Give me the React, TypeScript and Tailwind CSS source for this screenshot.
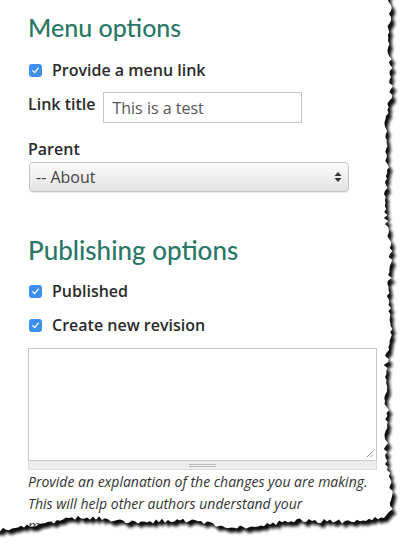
import React from 'react';

// torn paper edge, built once from a seeded jitter so it's stable between renders
const rand = (() => {
    let s = 1337;
    return () => {
        s = (s * 16807) % 2147483647;
        return s / 2147483647;
    };
})();

const buildPaperPath = () => {
    const pts: [number, number][] = [];
    for (let y = -10; y <= 512; y += 3) {
        const x = 388 + 2.5 * Math.sin(y / 37) + 1.5 * Math.sin(y / 13 + 1) + (rand() - 0.5) * 4.5;
        pts.push([x, y]);
    }
    for (let x = 384; x >= -10; x -= 3) {
        const y = 522 + 3 * Math.sin(x / 41 + 2) + 2 * Math.sin(x / 17) + (rand() - 0.5) * 4.5 + (x < 25 ? (25 - x) * 0.2 : 0);
        pts.push([x, y]);
    }
    return 'M-10 -10 ' + pts.map(([x, y]) => `L${x.toFixed(1)} ${y.toFixed(1)}`).join(' ') + ' Z';
};

const PAPER = buildPaperPath();
const OUTSIDE = 'M-20 -20 H430 V570 H-20 Z ' + PAPER;

const TornEdge = () => (
    <svg className="absolute inset-0 pointer-events-none" width="404" height="544" viewBox="0 0 404 544">
        <defs>
            <filter id="blur" x="-10%" y="-10%" width="120%" height="120%">
                <feGaussianBlur stdDeviation="1.8" />
            </filter>
            <clipPath id="outside">
                <path d={OUTSIDE} clipRule="evenodd" />
            </clipPath>
        </defs>
        <path d={OUTSIDE} fill="#ffffff" fillRule="evenodd" />
        <g clipPath="url(#outside)">
            <path d={PAPER} transform="translate(3.5 4.5)" fill="#111111" filter="url(#blur)" />
        </g>
    </svg>
);

const Check = ({ label }: { label: string }) => (
    <div className="flex items-center h-[20px]">
        <span className="w-[13px] h-[13px] ml-[1px] rounded-[3px] bg-[#3d8ff0] flex items-center justify-center">
            <svg width="9" height="9" viewBox="0 0 9 9">
                <path d="M1.8 4.8 L3.7 6.6 L7.3 2.2" fill="none" stroke="#fff" strokeWidth="1.3" strokeLinecap="round" strokeLinejoin="round" />
            </svg>
        </span>
        <span className="ml-[10px] text-[16px] font-semibold text-[#2b2b2b]">{label}</span>
    </div>
);

export default function App() {
    return (
        <div className="relative w-[404px] h-[544px] overflow-hidden bg-white font-['Open_Sans',sans-serif]">
            <div className="pl-[28px] pt-[12px]">
                {/* Menu options */}
                <h2 className="h-[30px] leading-[30px] text-[25px] font-medium text-[#2a7767] font-['Lato',sans-serif]">Menu options</h2>
                <div className="mt-[18px]">
                    <Check label="Provide a menu link" />
                </div>
                <div className="mt-[12px] flex items-start">
                    <label className="pt-[2px] leading-[20px] text-[16px] font-semibold text-[#2b2b2b]">Link title</label>
                    <div className="ml-[8px] w-[199px] h-[31px] border border-[#c8c8c8] flex items-center px-[8px] text-[16px] text-[#555]">
                        This is a test
                    </div>
                </div>
                <div className="mt-[16px] leading-[20px] text-[16px] font-semibold text-[#2b2b2b]">Parent</div>
                <div className="mt-[3px] ml-[1px] w-[320px] h-[30px] rounded-[4px] border border-[#c4c4c4] bg-gradient-to-b from-[#fbfbfb] to-[#e4e4e4] shadow-[0_1px_1px_rgba(0,0,0,0.08)] flex items-center justify-between pl-[6px] pr-[6px]">
                    <span className="text-[16px] text-[#444]">-- About</span>
                    <svg width="8" height="12" viewBox="0 0 8 12">
                        <path d="M4 1 L7.5 5 H0.5 Z" fill="#333" />
                        <path d="M4 11 L7.5 7 H0.5 Z" fill="#333" />
                    </svg>
                </div>

                {/* Publishing options */}
                <h2 className="mt-[43px] h-[30px] leading-[30px] text-[26px] font-medium text-[#2a7767] font-['Lato',sans-serif]">Publishing options</h2>
                <div className="mt-[16px]">
                    <Check label="Published" />
                </div>
                <div className="mt-[14px]">
                    <Check label="Create new revision" />
                </div>
                <div className="mt-[13px] w-[349px]">
                    <div className="relative h-[113px] border border-[#c8c8c8] bg-white">
                        <svg className="absolute right-[2px] bottom-[2px]" width="8" height="8" viewBox="0 0 8 8">
                            <path d="M7 1 L1 7 M7 4.5 L4.5 7" stroke="#888" strokeWidth="1" />
                        </svg>
                    </div>
                    <div className="h-[9px] bg-[#eeeeee] border border-t-0 border-[#dddddd] flex flex-col items-center justify-center gap-[1px]">
                        <span className="w-[27px] h-[1px] bg-[#bbbbbb]" />
                        <span className="w-[27px] h-[1px] bg-[#bbbbbb]" />
                    </div>
                </div>
                <p className="mt-[1px] w-[350px] text-[14px] leading-[22px] italic text-[#333]">
                    Provide an explanation of the changes you are making. This will help other authors understand your motivations.
                </p>
            </div>
            <TornEdge />
        </div>
    );
}
